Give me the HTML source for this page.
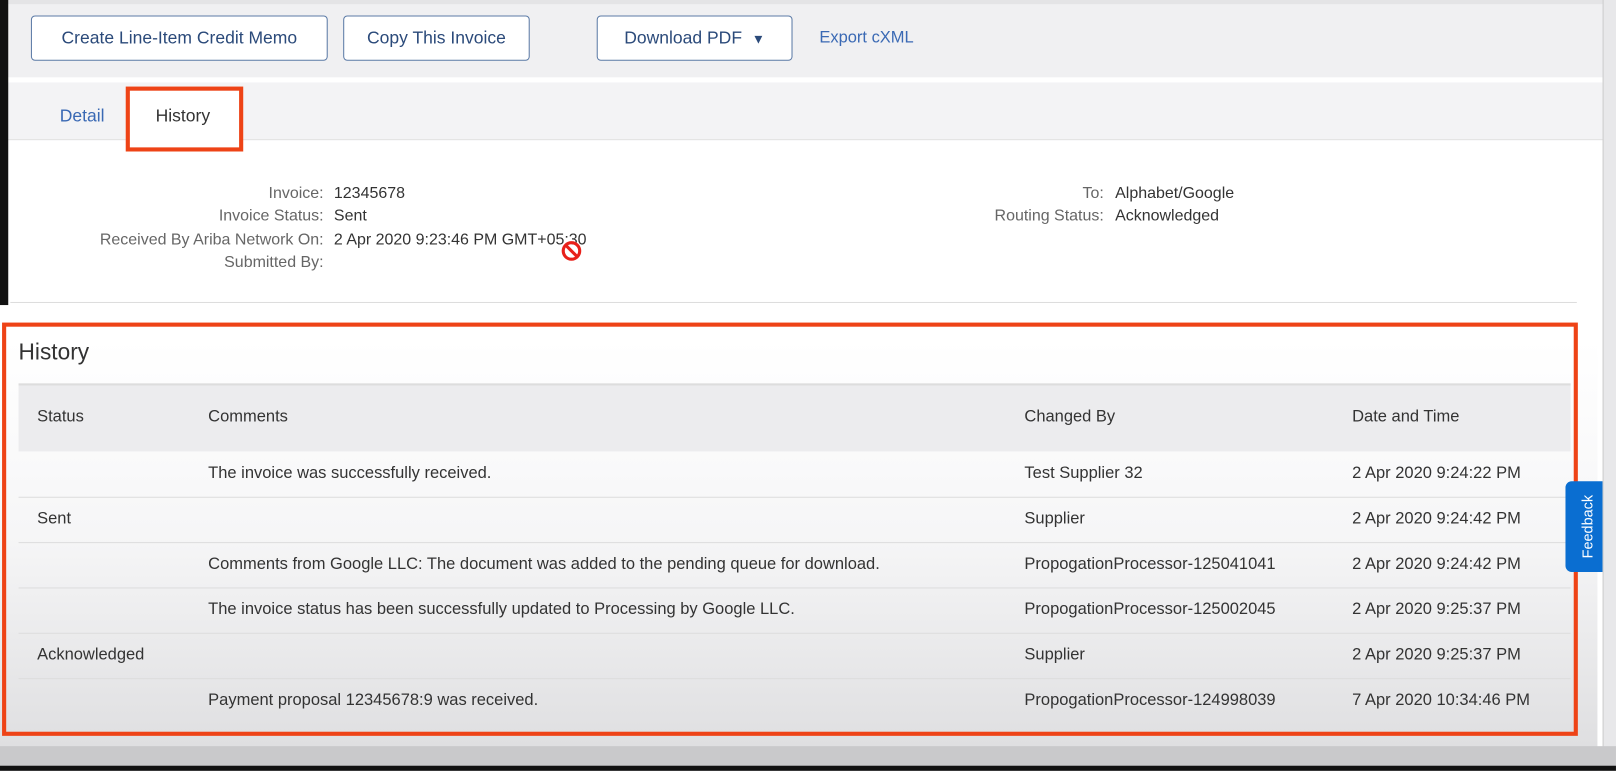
<!DOCTYPE html>
<html><head><meta charset="utf-8"><style>
*{margin:0;padding:0;box-sizing:border-box}
body{width:1616px;height:771px;position:relative;overflow:hidden;font-family:"Liberation Sans",sans-serif;background:#fff;color:#333}
#w{position:absolute;left:0;top:0;width:1568px;height:748px;transform:scale(1.0306);transform-origin:0 0;overflow:hidden}
.a{position:absolute}
.btn{position:absolute;top:15px;height:44px;border:1.5px solid #5b7aa6;border-radius:4px;background:#fff;color:#2b4a7a;font-size:17px;text-align:center;line-height:41px}
.lab{position:absolute;font-size:15.5px;color:#666;text-align:right}
.val{position:absolute;font-size:15.5px;color:#333}
.td{position:absolute;font-size:16px;color:#333}
.row{position:absolute;left:18px;width:1506px;height:1px;background:#ddd}
</style></head><body><div id="w">
<div class="a" style="left:0;top:0;width:1568px;height:75px;background:#f0f0f2"></div>
<div class="a" style="left:0;top:0;width:1568px;height:4px;background:#e4e4e6"></div>
<div class="btn" style="left:30px;width:288px">Create Line-Item Credit Memo</div>
<div class="btn" style="left:333px;width:181px">Copy This Invoice</div>
<div class="btn" style="left:579px;width:190px">Download PDF &nbsp;<span style="font-size:13px">▼</span></div>
<div class="a" style="left:795px;top:28px;font-size:16px;color:#3a69b4">Export cXML</div>
<div class="a" style="left:0;top:80px;width:1568px;height:56px;background:#f3f3f5;border-bottom:1px solid #e2e2e2"></div>
<div class="a" style="left:58px;top:103px;font-size:17px;color:#3a69b4">Detail</div>
<div class="a" style="left:126px;top:88px;width:106px;height:55px;background:#fff"></div>
<div class="a" style="left:122px;top:84px;width:114px;height:63px;border:4px solid #ee4316"></div>
<div class="a" style="left:151px;top:103px;font-size:17px;color:#333">History</div>
<div class="lab" style="left:0;width:314px;top:177px;line-height:22.3px">Invoice:<br>Invoice Status:<br>Received By Ariba Network On:<br>Submitted By:</div>
<div class="val" style="left:324px;top:177px;line-height:22.3px">12345678<br>Sent<br>2 Apr 2020 9:23:46 PM GMT+05:30</div>
<div class="a" style="left:545px;top:234px;width:19px;height:19px;border:3px solid #e8201a;border-radius:50%"><div style="position:absolute;left:5px;top:-2px;width:3px;height:17px;background:#e8201a;transform:rotate(-45deg)"></div></div>
<div class="lab" style="left:900px;width:171px;top:177px;line-height:22.3px">To:<br>Routing Status:</div>
<div class="val" style="left:1082px;top:177px;line-height:22.3px">Alphabet/Google<br>Acknowledged</div>
<div class="a" style="left:10px;top:293px;width:1520px;height:1px;background:#ddd"></div>
<div class="a" style="left:0;top:0;width:8px;height:296px;background:#111"></div>
<div class="a" style="left:0;top:330px;width:1550px;height:420px;background:linear-gradient(#fff 0%,#f6f6f7 45%,#dcdcde 100%)"></div>
<div class="a" style="left:18px;top:372px;width:1506px;height:66px;background:#ececee;border-top:2px solid #ddd"></div>
<div class="a" style="left:18px;top:329px;font-size:22px;color:#333">History</div>
<div class="td" style="left:36px;top:396px">Status</div>
<div class="td" style="left:202px;top:396px">Comments</div>
<div class="td" style="left:994px;top:396px">Changed By</div>
<div class="td" style="left:1312px;top:396px">Date and Time</div>
<div class="row" style="top:482px"></div><div class="row" style="top:526px"></div><div class="row" style="top:570px"></div><div class="row" style="top:614px"></div><div class="row" style="top:658px"></div>
<div class="td" style="left:202px;top:451px">The invoice was successfully received.</div>
<div class="td" style="left:994px;top:451px">Test Supplier 32</div>
<div class="td" style="left:1312px;top:451px">2 Apr 2020 9:24:22 PM</div>
<div class="td" style="left:36px;top:495px">Sent</div>
<div class="td" style="left:994px;top:495px">Supplier</div>
<div class="td" style="left:1312px;top:495px">2 Apr 2020 9:24:42 PM</div>
<div class="td" style="left:202px;top:539px">Comments from Google LLC: The document was added to the pending queue for download.</div>
<div class="td" style="left:994px;top:539px">PropogationProcessor-125041041</div>
<div class="td" style="left:1312px;top:539px">2 Apr 2020 9:24:42 PM</div>
<div class="td" style="left:202px;top:583px">The invoice status has been successfully updated to Processing by Google LLC.</div>
<div class="td" style="left:994px;top:583px">PropogationProcessor-125002045</div>
<div class="td" style="left:1312px;top:583px">2 Apr 2020 9:25:37 PM</div>
<div class="td" style="left:36px;top:627px">Acknowledged</div>
<div class="td" style="left:994px;top:627px">Supplier</div>
<div class="td" style="left:1312px;top:627px">2 Apr 2020 9:25:37 PM</div>
<div class="td" style="left:202px;top:671px">Payment proposal 12345678:9 was received.</div>
<div class="td" style="left:994px;top:671px">PropogationProcessor-124998039</div>
<div class="td" style="left:1312px;top:671px">7 Apr 2020 10:34:46 PM</div>
<div class="a" style="left:2px;top:313px;width:1529px;height:401px;border:4px solid #ee4316"></div>
<div class="a" style="left:1519px;top:467px;width:36px;height:88px;background:#0a6ed1;border-radius:6px 0 0 6px"></div>
<div class="a" style="left:1540px;top:511px;transform:translate(-50%,-50%) rotate(-90deg);color:#fff;font-size:14px">Feedback</div>
<div class="a" style="left:1555px;top:0;width:13px;height:748px;background:#e8e8ea;border-left:1px solid #ccc"></div>
<div class="a" style="left:0;top:724px;width:1568px;height:24px;background:#c9c9cb"></div>
<div class="a" style="left:0;top:743px;width:1568px;height:5px;background:#111"></div>
</div></body></html>
